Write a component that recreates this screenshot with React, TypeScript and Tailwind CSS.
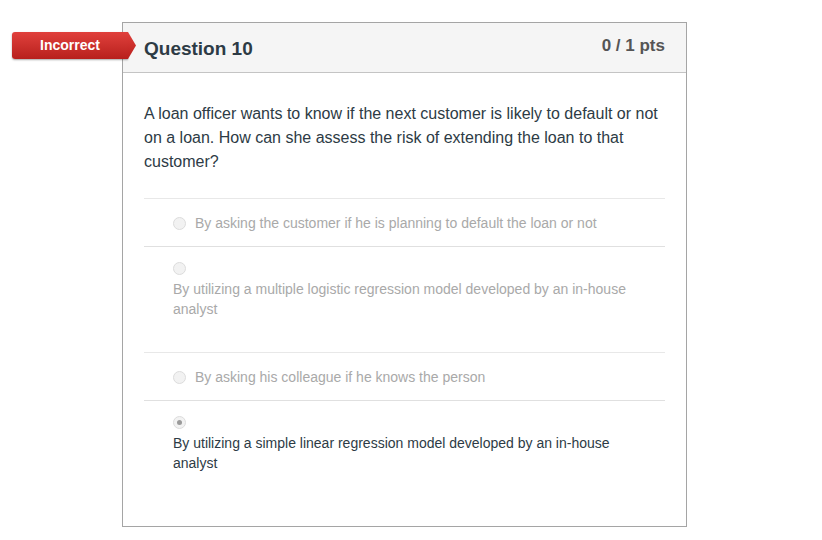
import React from "react";

type Answer = {
  text: string;
  stacked: boolean;
  selected?: boolean;
};

const answers: Answer[] = [
  { text: "By asking the customer if he is planning to default the loan or not", stacked: false },
  { text: "By utilizing a multiple logistic regression model developed by an in-house analyst", stacked: true },
  { text: "By asking his colleague if he knows the person", stacked: false },
  { text: "By utilizing a simple linear regression model developed by an in-house analyst", stacked: true, selected: true },
];

function Radio({ selected }: { selected?: boolean }) {
  return (
    <span className="flex h-[13px] w-[13px] shrink-0 items-center justify-center rounded-full border border-[#dcdcdc] bg-[#f2f2f2]">
      {selected && <span className="h-[5px] w-[5px] rounded-full bg-[#9a9a9a]" />}
    </span>
  );
}

function AnswerRow({ a, last }: { a: Answer; last: boolean }) {
  const color = a.selected ? "text-[#2d3b45]" : "text-[#a9a9a9]";
  if (!a.stacked) {
    return (
      <div className="flex items-center gap-[9px] border-t border-[#e8e8e8] pt-[14px] pb-[13px] pl-[29px]">
        <Radio selected={a.selected} />
        <span className={`text-[14px] leading-[20px] ${color}`}>{a.text}</span>
      </div>
    );
  }
  return (
    <div className={`border-t border-[#e0e0e0] pt-[15px] pl-[29px] pr-[30px] ${last ? "pb-[10px]" : "pb-[33px]"}`}>
      <Radio selected={a.selected} />
      <p className={`mt-[4px] text-[14px] leading-[20px] ${color}`}>{a.text}</p>
    </div>
  );
}

export default function App() {
  return (
    <div className="relative min-h-[540px] w-[822px] bg-white pt-[22px] pl-[122px] font-['Liberation_Sans',Arial,sans-serif] text-[#2d3b45]">
      {/* result tag over the card edge */}
      <div className="absolute left-[12px] top-[32px] flex h-[27px] items-center">
        <div className="flex h-[27px] w-[116px] items-center justify-center rounded-l-[3px] bg-gradient-to-b from-[#e0403c] to-[#b81f1c] text-[14px] font-bold text-white shadow-[0_1px_2px_rgba(0,0,0,0.35)]">
          Incorrect
        </div>
        <svg width="9" height="27" viewBox="0 0 9 27" className="-ml-px">
          <defs>
            <linearGradient id="tip" x1="0" y1="0" x2="0" y2="1">
              <stop offset="0" stopColor="#e0403c" />
              <stop offset="1" stopColor="#b81f1c" />
            </linearGradient>
          </defs>
          <path d="M0 0 L1 0 L9 13.5 L1 27 L0 27 Z" fill="url(#tip)" />
        </svg>
      </div>

      <div className="h-[505px] w-[565px] border border-[#a5a5a5]">
        <div className="flex h-[50px] items-start justify-between border-b border-[#c4c4c4] bg-[#f5f5f5] px-[21px]">
          <h2 className="mt-[14px] text-[19px] font-bold leading-[23px] text-[#2d3b45]">Question 10</h2>
          <span className="mt-[12px] text-[17px] font-bold leading-[21px] text-[#555]">0 / 1 pts</span>
        </div>

        <div className="px-[21px] pt-[29px]">
          <p className="text-[16px] leading-[24px] text-[#2d3b45]">
            A loan officer wants to know if the next customer is likely to default or not on a loan. How can she assess the risk of extending the loan to that customer?
          </p>

          <div className="mt-[24px]">
            {answers.map((a, i) => (
              <AnswerRow key={i} a={a} last={i === answers.length - 1} />
            ))}
          </div>
        </div>
      </div>
    </div>
  );
}
